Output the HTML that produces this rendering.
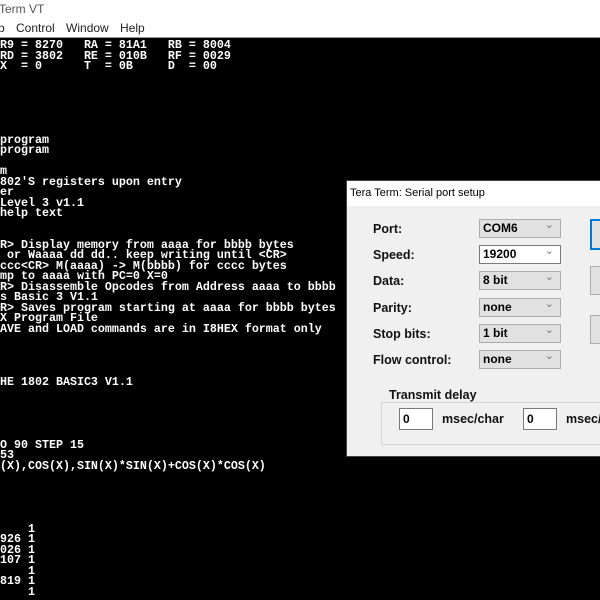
<!DOCTYPE html>
<html><head><style>
body{margin:0;width:600px;height:600px;overflow:hidden;background:#000;position:relative;font-family:"Liberation Sans",sans-serif}
#top{position:absolute;left:0;top:0;width:600px;height:37px;background:#fff;border-bottom:1px solid #999}
#top .t{position:absolute;left:-1px;top:2px;font-size:12px;color:#555}
#top .m{position:absolute;left:-2px;top:21px;font-size:12px;color:#222;word-spacing:8px}
#term{position:absolute;left:0;top:40px;margin:0;color:#fff;font-family:"Liberation Mono",monospace;font-weight:bold;font-size:11.67px;line-height:10.52px;white-space:pre}
#dlg{position:absolute;left:346px;top:180px;width:260px;height:275px;background:#f0f0f0;border:1px solid #444}
#dlg .tt{height:25px;background:#fff;font-size:11px;line-height:24px;padding-left:3px;color:#000}
.l{position:absolute;left:26px;font-size:12.5px;font-weight:bold;color:#111}
.c{position:absolute;left:132px;width:82px;height:19px;background:#e1e1e1;border:1px solid #adadad;box-sizing:border-box;font-size:12px;font-weight:bold;line-height:17px;padding-left:3px}
.c:after{content:"⌄";position:absolute;right:6px;top:-3px;font-weight:normal;color:#777;font-size:11px}
.c.w{background:#fff;border-color:#7a7a7a}
.b{position:absolute;left:243px;width:20px;height:27px;background:#e1e1e1;border:1px solid #adadad}
.in{position:absolute;width:34px;height:22px;background:#fff;border:1px solid #7a7a7a;box-sizing:border-box;font-size:12px;font-weight:bold;padding:3px 0 0 3px}
.lt{position:absolute;font-size:12.5px;font-weight:bold;color:#111}
</style></head><body>
<div id="top"><div class="t">Term VT</div><div class="m">p Control Window Help</div></div>
<pre id="term">R9 = 8270   RA = 81A1   RB = 8004
RD = 3802   RE = 010B   RF = 0029
X  = 0      T  = 0B     D  = 00






program
program

m
802'S registers upon entry
er
Level 3 v1.1
help text


R> Display memory from aaaa for bbbb bytes
 or Waaaa dd dd.. keep writing until &lt;CR&gt;
ccc&lt;CR&gt; M(aaaa) -&gt; M(bbbb) for cccc bytes
mp to aaaa with PC=0 X=0
R> Disassemble Opcodes from Address aaaa to bbbb
s Basic 3 V1.1
R> Saves program starting at aaaa for bbbb bytes
X Program File
AVE and LOAD commands are in I8HEX format only




HE 1802 BASIC3 V1.1





O 90 STEP 15
53
(X),COS(X),SIN(X)*SIN(X)+COS(X)*COS(X)





    1
926 1
026 1
107 1
    1
819 1
    1</pre>
<div id="dlg">
<div class="tt">Tera Term: Serial port setup</div>
<div class="l" style="top:41px">Port:</div><div class="c" style="top:38px">COM6</div>
<div class="l" style="top:67px">Speed:</div><div class="c w" style="top:64px">19200</div>
<div class="l" style="top:93px">Data:</div><div class="c" style="top:90px">8 bit</div>
<div class="l" style="top:120px">Parity:</div><div class="c" style="top:117px">none</div>
<div class="l" style="top:146px">Stop bits:</div><div class="c" style="top:143px">1 bit</div>
<div class="l" style="top:172px">Flow control:</div><div class="c" style="top:169px">none</div>
<div class="b" style="top:38px;border:2px solid #0078d7"></div>
<div class="b" style="top:85px"></div>
<div class="b" style="top:134px"></div>
<div style="position:absolute;left:34px;top:221px;width:240px;height:41px;border:1px solid #d5d5d5"></div>
<div class="lt" style="left:40px;top:207px;background:#f0f0f0;padding:0 2px">Transmit delay</div>
<div class="in" style="left:52px;top:227px">0</div><div class="lt" style="left:95px;top:231px">msec/char</div>
<div class="in" style="left:176px;top:227px">0</div><div class="lt" style="left:219px;top:231px">msec/line</div>
</div>
</body></html>
